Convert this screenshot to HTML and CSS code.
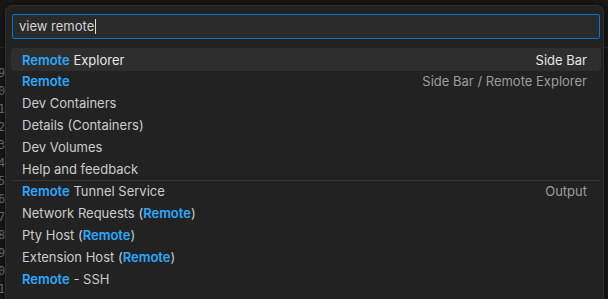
FILE: index.html
```html
<!DOCTYPE html>
<html lang="en">
<head>
  <meta charset="UTF-8">
  <title>Quick Open</title>
  <link rel="stylesheet" href="styles.css">
</head>
<body>
  <!-- editor behind the quick input -->
  <div class="editor">
    <div class="tabs"></div>
    <div class="gutter">
      <span>9</span><span>0</span><span>1</span><span>2</span><span>3</span><span>4</span>
      <span>5</span><span>6</span><span>7</span><span>8</span><span>9</span><span>0</span>
      <span>1</span>
    </div>
  </div>

  <div class="quick-input">
    <div class="input-box">view remote<span class="caret"></span></div>
    <ul class="list">
      <li class="row focused"><span class="label"><b>Remote</b> Explorer</span><span class="desc strong">Side Bar</span></li>
      <li class="row"><span class="label"><b>Remote</b></span><span class="desc">Side Bar / Remote Explorer</span></li>
      <li class="row"><span class="label">Dev Containers</span></li>
      <li class="row"><span class="label">Details (Containers)</span></li>
      <li class="row"><span class="label">Dev Volumes</span></li>
      <li class="row"><span class="label">Help and feedback</span></li>
      <li class="row sep"><span class="label"><b>Remote</b> Tunnel Service</span><span class="desc">Output</span></li>
      <li class="row"><span class="label">Network Requests (<b>Remote</b>)</span></li>
      <li class="row"><span class="label">Pty Host (<b>Remote</b>)</span></li>
      <li class="row"><span class="label">Extension Host (<b>Remote</b>)</span></li>
      <li class="row"><span class="label"><b>Remote</b> - SSH</span></li>
    </ul>
  </div>
</body>
</html>
```

FILE: styles.css
```css
:root {
  --bg: #181818;
  --widget-bg: #222222;
  --widget-border: #2f2f2f;
  --input-bg: #2a2a2a;
  --focus-border: #0078d4;
  --row-focus: #2e2e2e;
  --text: #cccccc;
  --desc: #9d9d9d;
  --hl: #2aaaff;
}
html, body {
  margin: 0;
  height: 100%;
}
body {
  background-color: var(--bg);
  font-family: Inter, "Noto Sans", sans-serif;
  font-size: 13px;
  color: var(--text);
  overflow: hidden;
  position: relative;
}
/* editor behind */
.editor {
  height: 100%;
  overflow: hidden;
}
.tabs {
  height: 47px;
  border-bottom: 1px solid #2b2b2b;
}
.gutter {
  display: flex;
  flex-direction: column;
  margin-top: 16px;
  padding-left: 0;
  font-family: "DejaVu Sans Mono", monospace;
  font-size: 12px;
  color: #6e7681;
}
.gutter span {
  height: 18px;
  line-height: 18px;
  width: 8px;
  text-indent: -2px;
  overflow: hidden;
}
/* quick input overlay */
.quick-input {
  position: absolute;
  left: 5px;
  top: 5px;
  width: 597px;
  height: 289px;
  background-color: var(--widget-bg);
  border: 1px solid var(--widget-border);
  border-radius: 7px;
  box-shadow: 0 0 8px rgba(0, 0, 0, 0.6);
  padding: 8px 0 0 0;
  box-sizing: content-box;
}
.input-box {
  margin: 0 3px 0 6px;
  height: 23px;
  line-height: 23px;
  border: 1px solid var(--focus-border);
  border-radius: 2px;
  background-color: var(--input-bg);
  padding-left: 6px;
  font-size: 13px;
  color: #d4d4d4;
}
.caret {
  display: inline-block;
  width: 1px;
  height: 15px;
  background-color: #e0e0e0;
  vertical-align: -3px;
  margin-left: 1px;
}
.list {
  list-style: none;
  margin: 9px 2px 0 5px;
  padding: 0;
}
.row {
  display: flex;
  justify-content: space-between;
  align-items: center;
  height: 22px;
  padding: 0 14px 0 11px;
  border-radius: 4px;
  white-space: nowrap;
}
.row.focused {
  height: 23px;
  margin-bottom: -1px;
  background-color: var(--row-focus);
  color: #e6e6e6;
}
.row.sep {
  position: relative;
}
.row.sep::before {
  content: "";
  position: absolute;
  left: 1px;
  right: 1px;
  top: 0;
  border-top: 1px solid #343434;
}
.label b {
  color: var(--hl);
  font-weight: 600;
}
.desc {
  color: var(--desc);
}
.desc.strong {
  color: #e6e6e6;
}
```
